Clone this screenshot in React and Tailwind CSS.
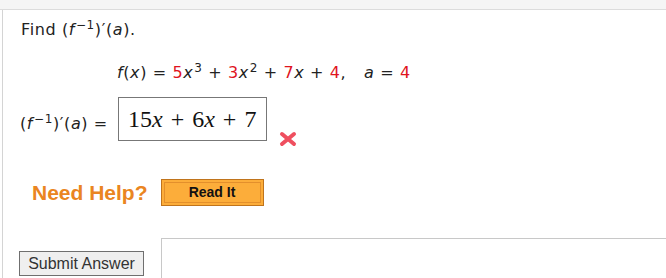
const red = 'text-[#e0141e]'

function Sup({ children }) {
  return <sup className="ml-[1px] text-[12px]">{children}</sup>
}

function FInv() {
  return (
    <>
      (<i>f</i>
      <Sup>−1</Sup>)′(<i>a</i>)
    </>
  )
}

export default function App() {
  return (
    <div className="h-[278px] w-[666px] overflow-hidden bg-white font-['DejaVu_Sans',sans-serif] text-[16px] tracking-[0.6px] text-[#222]">
      <div className="h-[10px] border-b border-[#dcdcdc] bg-[#f5f5f5]" />
      <div className="ml-[2px] h-[268px] border-l border-[#d4d4d4]">
        <p className="h-[30px] pl-[18px] pt-[10px] leading-[20px]">
          Find <FInv />.
        </p>

        <p className="mt-[23px] h-[20px] pl-[114px] leading-[20px]">
          <i>f</i>(<i>x</i>) = <span className={red}>5</span>
          <i>x</i>
          <Sup>3</Sup> + <span className={red}>3</span>
          <i>x</i>
          <Sup>2</Sup> + <span className={red}>7</span>
          <i>x</i> + <span className={red}>4</span>,<span className="inline-block w-[18px]" />
          <i>a</i> = <span className={red}>4</span>
        </p>

        <div className="mt-[14px] flex h-[44px] items-start pl-[17px]">
          <span className="mt-[17px] w-[98px] whitespace-nowrap leading-[20px]">
            <FInv /> =
          </span>
          <div className="flex h-[44px] w-[149px] items-center border border-[#777] pl-[9px] font-['Liberation_Serif',serif] text-[24px] leading-none tracking-normal text-[#111]">
            15<i>x</i>
            <span className="px-[8px]">+</span>6<i>x</i>
            <span className="px-[8px]">+</span>7
          </div>
          <svg className="ml-[12px] mt-[34px]" width="18" height="16" viewBox="0 0 18 16">
            <path d="M3 3 L15 13 M15 3 L3 13" stroke="#ef4f5f" strokeWidth="4" strokeLinecap="round" />
          </svg>
        </div>

        <div className="mt-[38px] flex h-[27px] items-center pl-[29px] tracking-normal">
          <span className="font-['Liberation_Sans',sans-serif] text-[21px] font-bold leading-[24px] text-[#ea8521]">Need Help?</span>
          <button className="ml-[13px] flex h-[27px] w-[103px] items-center justify-center border border-[#c0741c] bg-[#fcad3a] p-[2px]">
            <span className="flex h-full w-full items-center justify-center border border-[#e38f2c] font-['Liberation_Sans',sans-serif] text-[14px] font-bold text-[#111]">
              Read It
            </span>
          </button>
        </div>

        <div className="mt-[32px] flex h-[40px] items-end tracking-normal">
          <button className="mb-[2px] ml-[16px] h-[25px] w-[125px] border border-[#6f6f6f] bg-[#efefef] font-['Liberation_Sans',sans-serif] text-[16px] leading-none text-[#333]">
            Submit Answer
          </button>
          <div className="ml-[17px] h-[40px] flex-1 border-l border-t border-[#c8c8c8]" />
        </div>
      </div>
    </div>
  )
}
